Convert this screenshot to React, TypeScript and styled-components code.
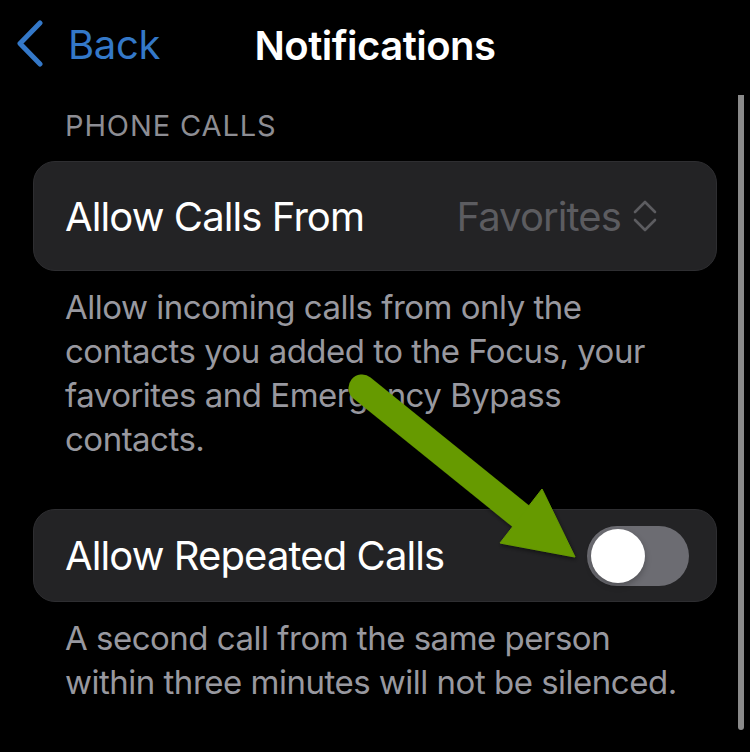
import React from "react";
import styled, { createGlobalStyle } from "styled-components";

const GlobalStyle = createGlobalStyle`
  html, body {
    margin: 0;
    padding: 0;
    background: #000;
  }
  body {
    font-family: Inter, "Noto Sans", "Liberation Sans", sans-serif;
    -webkit-font-smoothing: antialiased;
  }
`;

const App = () => {
  return (
    <Page>
      <GlobalStyle />
      <NavBar>
        <BackButton>
          <svg width="30" height="48" viewBox="0 0 30 48">
            <polyline
              points="26,3 6,23.5 26,44"
              fill="none"
              stroke="#3478c8"
              strokeWidth="5"
              strokeLinecap="round"
              strokeLinejoin="round"
            />
          </svg>
          <BackLabel>Back</BackLabel>
        </BackButton>
        <Title>Notifications</Title>
        <span />
      </NavBar>

      <Content>
        <SectionHeader>PHONE CALLS</SectionHeader>
        <Card $height={110}>
          <RowLabel>Allow Calls From</RowLabel>
          <Picker>
            Favorites
            <svg width="24" height="32" viewBox="0 0 24 32">
              <polyline
                points="2,12 12,2 22,12"
                fill="none"
                stroke="#5c5c60"
                strokeWidth="2.6"
                strokeLinecap="round"
                strokeLinejoin="round"
              />
              <polyline
                points="2,20 12,30 22,20"
                fill="none"
                stroke="#5c5c60"
                strokeWidth="2.6"
                strokeLinecap="round"
                strokeLinejoin="round"
              />
            </svg>
          </Picker>
        </Card>
        <Footer>
          Allow incoming calls from only the contacts you added to the Focus,
          your favorites and Emergency Bypass contacts.
        </Footer>

        <Card $height={93} $gap={48}>
          <RowLabel>Allow Repeated Calls</RowLabel>
          <Toggle>
            <Knob />
          </Toggle>
        </Card>
        <Footer>
          A second call from the same person within three minutes will not be
          silenced.
        </Footer>
      </Content>

      <ScrollIndicator />

      <Annotation width="750" height="752" viewBox="0 0 750 752">
        <defs>
          <filter id="arrowShadow" x="-20%" y="-20%" width="140%" height="140%">
            <feDropShadow dx="1" dy="2" stdDeviation="2" floodColor="#000" floodOpacity="0.5" />
          </filter>
        </defs>
        <g filter="url(#arrowShadow)" fill="#669a00" stroke="#669a00">
          <line x1="362" y1="388" x2="528" y2="522" strokeWidth="27" strokeLinecap="round" />
          <polygon points="575,557 500,543 542,489" strokeWidth="1" strokeLinejoin="round" />
        </g>
      </Annotation>
    </Page>
  );
};

const Page = styled.div`
  position: relative;
  width: 750px;
  height: 752px;
  overflow: hidden;
  background: #000;
`;

const NavBar = styled.div`
  height: 90px;
  display: grid;
  grid-template-columns: 1fr auto 1fr;
  align-items: center;
  padding: 0 14px;
`;

const BackButton = styled.div`
  display: flex;
  align-items: center;
  gap: 24px;
  margin-top: -2px;
`;

const BackLabel = styled.span`
  font-size: 40px;
  color: #3478c8;
  letter-spacing: -0.3px;
`;

const Title = styled.div`
  font-size: 40px;
  font-weight: 600;
  color: #fff;
  letter-spacing: -0.5px;
`;

const Content = styled.div`
  padding: 0 33px;
  display: flex;
  flex-direction: column;
`;

const SectionHeader = styled.div`
  padding: 18px 32px 0;
  height: 53px;
  font-size: 29px;
  color: #8d8d93;
  letter-spacing: 0.9px;
`;

const Card = styled.div<{ $height: number; $gap?: number }>`
  height: ${(p) => p.$height}px;
  margin-top: ${(p) => p.$gap ?? 0}px;
  box-sizing: border-box;
  display: flex;
  align-items: center;
  justify-content: space-between;
  padding: 0 27px 0 31px;
  background: #232325;
  border: 1px solid #2e2e31;
  border-radius: 22px;
`;

const RowLabel = styled.div`
  font-size: 40px;
  color: #fff;
  letter-spacing: -0.9px;
`;

const Picker = styled.div`
  display: flex;
  align-items: center;
  gap: 12px;
  padding-right: 32px;
  font-size: 40px;
  color: #5c5c60;
  letter-spacing: -0.9px;
`;

const Footer = styled.div`
  padding: 14px 32px 0;
  font-size: 33px;
  line-height: 44px;
  color: #98989f;
  letter-spacing: -0.5px;
`;

const Toggle = styled.div`
  width: 102px;
  height: 60px;
  border-radius: 30px;
  background: #6c6c72;
  display: flex;
  align-items: center;
  padding-left: 4px;
  box-sizing: border-box;
`;

const Knob = styled.div`
  width: 54px;
  height: 54px;
  border-radius: 50%;
  background: #fff;
  box-shadow: 0 3px 6px rgba(0, 0, 0, 0.25);
`;

const ScrollIndicator = styled.div`
  position: absolute;
  left: 738px;
  top: 95px;
  width: 6px;
  height: 635px;
  border-radius: 0 0 3px 3px;
  background: #8a8a8a;
`;

const Annotation = styled.svg`
  position: absolute;
  left: 0;
  top: 0;
  pointer-events: none;
`;

export default App;
